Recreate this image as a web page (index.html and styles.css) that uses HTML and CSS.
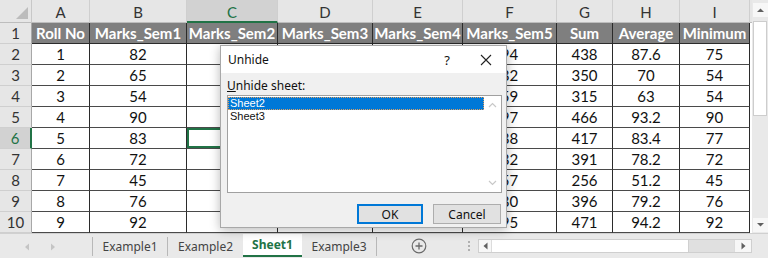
FILE: index.html
```html
<!DOCTYPE html>
<html>
<head>
<meta charset="utf-8">
<link rel="stylesheet" href="styles.css">
</head>
<body>
<div class="top">
  <div class="grid">
    <div class="corner"></div>
    <div class="ch">A</div><div class="ch">B</div><div class="ch sel">C</div><div class="ch">D</div><div class="ch">E</div><div class="ch">F</div><div class="ch">G</div><div class="ch">H</div><div class="ch">I</div><div class="ch jx"></div>

    <div class="rh">1</div>
    <div class="hd">Roll No</div><div class="hd">Marks_Sem1</div><div class="hd">Marks_Sem2</div><div class="hd">Marks_Sem3</div><div class="hd">Marks_Sem4</div><div class="hd">Marks_Sem5</div><div class="hd">Sum</div><div class="hd">Average</div><div class="hd">Minimum</div><div class="jx"></div>

    <div class="rh">2</div>
    <div class="d">1</div><div class="d">82</div><div class="d"></div><div class="d"></div><div class="d"></div><div class="d">94</div><div class="d">438</div><div class="d">87.6</div><div class="d">75</div><div class="jx"></div>

    <div class="rh">3</div>
    <div class="d">2</div><div class="d">65</div><div class="d"></div><div class="d"></div><div class="d"></div><div class="d">82</div><div class="d">350</div><div class="d">70</div><div class="d">54</div><div class="jx"></div>

    <div class="rh">4</div>
    <div class="d">3</div><div class="d">54</div><div class="d"></div><div class="d"></div><div class="d"></div><div class="d">59</div><div class="d">315</div><div class="d">63</div><div class="d">54</div><div class="jx"></div>

    <div class="rh">5</div>
    <div class="d">4</div><div class="d">90</div><div class="d"></div><div class="d"></div><div class="d"></div><div class="d">97</div><div class="d">466</div><div class="d">93.2</div><div class="d">90</div><div class="jx"></div>

    <div class="rh sel">6</div>
    <div class="d">5</div><div class="d">83</div><div class="d act"></div><div class="d"></div><div class="d"></div><div class="d">88</div><div class="d">417</div><div class="d">83.4</div><div class="d">77</div><div class="jx"></div>

    <div class="rh">7</div>
    <div class="d">6</div><div class="d">72</div><div class="d"></div><div class="d"></div><div class="d"></div><div class="d">82</div><div class="d">391</div><div class="d">78.2</div><div class="d">72</div><div class="jx"></div>

    <div class="rh">8</div>
    <div class="d">7</div><div class="d">45</div><div class="d"></div><div class="d"></div><div class="d"></div><div class="d">57</div><div class="d">256</div><div class="d">51.2</div><div class="d">45</div><div class="jx"></div>

    <div class="rh">9</div>
    <div class="d">8</div><div class="d">76</div><div class="d"></div><div class="d"></div><div class="d"></div><div class="d">80</div><div class="d">396</div><div class="d">79.2</div><div class="d">76</div><div class="jx"></div>

    <div class="rh">10</div>
    <div class="d">9</div><div class="d">92</div><div class="d"></div><div class="d"></div><div class="d"></div><div class="d">95</div><div class="d">471</div><div class="d">94.2</div><div class="d">92</div><div class="jx"></div>
  </div>
  <div class="vscroll">
    <div class="sarrow"><svg width="9" height="6" viewBox="0 0 9 6"><path d="M1 5 L4.5 1.5 L8 5 Z" fill="#606060"/></svg></div>
    <div class="vthumb"></div>
    <div class="vtrack"></div>
    <div class="sarrow"><svg width="9" height="6" viewBox="0 0 9 6"><path d="M1 1 L4.5 4.5 L8 1 Z" fill="#606060"/></svg></div>
  </div>
</div>

<div class="tabbar">
  <div class="nav">
    <svg class="navarr" width="6" height="8" viewBox="0 0 6 8"><path d="M5 0.5 L1 4 L5 7.5 Z" fill="#c4c4c4"/></svg>
    <svg class="navarr" width="6" height="8" viewBox="0 0 6 8"><path d="M1 0.5 L5 4 L1 7.5 Z" fill="#c4c4c4"/></svg>
  </div>
  <div class="tab w1">Example1</div>
  <div class="tab w2">Example2</div>
  <div class="tab active">Sheet1</div>
  <div class="tab w1">Example3</div>
  <div class="addsheet">
    <svg width="16" height="16" viewBox="0 0 16 16"><circle cx="8" cy="8" r="6.8" fill="none" stroke="#6a6a6a" stroke-width="1.2"/><path d="M8 4.5 V11.5 M4.5 8 H11.5" stroke="#6a6a6a" stroke-width="1.3"/></svg>
  </div>
  <div class="dots"><span></span><span></span><span></span></div>
  <div class="hscroll">
    <div class="harrow"><svg width="5" height="8" viewBox="0 0 5 8"><path d="M4.5 0.5 L0.5 4 L4.5 7.5 Z" fill="#606060"/></svg></div>
    <div class="hthumb"></div>
    <div class="htrack"></div>
    <div class="harrow r"><svg width="5" height="8" viewBox="0 0 5 8"><path d="M0.5 0.5 L4.5 4 L0.5 7.5 Z" fill="#606060"/></svg></div>
  </div>
</div>

<div class="dialog">
  <div class="dtitle">
    <span class="dname">Unhide</span>
    <span class="dq">?</span>
    <span class="dx"><svg width="12" height="12" viewBox="0 0 12 12"><path d="M1 1 L11 11 M11 1 L1 11" stroke="#222" stroke-width="1.1"/></svg></span>
  </div>
  <div class="dbody">
    <div class="dlabel"><u>U</u>nhide sheet:</div>
    <div class="list">
      <div class="items">
        <div class="item selitem">Sheet2</div>
        <div class="item">Sheet3</div>
      </div>
      <div class="lscroll">
        <svg width="9" height="6" viewBox="0 0 9 6"><path d="M1 5 L4.5 1.5 L8 5" fill="none" stroke="#c8c8c8" stroke-width="1.2"/></svg>
        <svg width="9" height="6" viewBox="0 0 9 6"><path d="M1 1 L4.5 4.5 L8 1" fill="none" stroke="#c8c8c8" stroke-width="1.2"/></svg>
      </div>
    </div>
    <div class="btns">
      <div class="btn ok">OK</div>
      <div class="btn">Cancel</div>
    </div>
  </div>
</div>
</body>
</html>
```

FILE: styles.css
```css
* { box-sizing: border-box; margin: 0; padding: 0; }
html, body { width: 768px; height: 258px; overflow: hidden; }
body {
  font-family: Lato, "Open Sans", sans-serif;
  background: #ffffff;
  position: relative;
}

.top { display: flex; height: 233px; }

.grid {
  display: grid;
  grid-template-columns: 32px 58px 97px 91px 95px 90px 94px 56px 67px 70px 2px;
  grid-template-rows: 23px repeat(10, 21px);
  width: 752px;
}
.grid > div {
  display: flex;
  align-items: center;
  justify-content: center;
  font-size: 15px;
  color: #111;
  white-space: nowrap;
  overflow: hidden;
}

.corner {
  background: #e6e6e6;
  border-right: 1px solid #c8c8c8;
  border-bottom: 1px solid #bdbdbd;
  position: relative;
}
.corner::after {
  content: "";
  position: absolute;
  right: 3px;
  bottom: 3px;
  width: 0;
  height: 0;
  border-left: 12px solid transparent;
  border-bottom: 12px solid #bcbcbc;
}

.grid > .ch {
  background: #e6e6e6;
  border-right: 1px solid #cfcfcf;
  border-bottom: 1px solid #bdbdbd;
  color: #333;
  font-size: 15px;
  padding-top: 2px;
}
.grid > .ch.sel {
  background: #d2d2d2;
  color: #217346;
  border-bottom: 2px solid #217346;
}
.grid > .jx { background: #ffffff; }
.grid > .ch.jx { background: #e6e6e6; border-right: none; }

.grid > .rh {
  background: #e6e6e6;
  border-right: 1px solid #a8a8a8;
  border-bottom: 1px solid #cfcfcf;
  color: #333;
}
.grid > .rh.sel {
  background: #d2d2d2;
  color: #217346;
  border-right: 2px solid #217346;
}

.grid > .hd {
  background: #7f7f7f;
  color: #ffffff;
  font-weight: 700;
  border-right: 1px solid #2b2b2b;
  border-bottom: 1px solid #2b2b2b;
}
.grid > .d {
  border-right: 1px solid #2b2b2b;
  border-bottom: 1px solid #4a4a4a;
}
.grid > .d.act {
  box-shadow: inset 0 0 0 2px #217346;
}

.vscroll {
  width: 16px;
  background: #e9e9e9;
  display: flex;
  flex-direction: column;
  align-items: center;
  padding: 3px 0 1px;
}
.sarrow {
  width: 15px;
  height: 14px;
  display: flex;
  align-items: center;
  justify-content: center;
  background: #f7f7f7;
}
.vthumb {
  width: 14px;
  height: 95px;
  margin-top: 4px;
  background: #ffffff;
  border: 1px solid #cdcdcd;
}
.vtrack { flex: 1; }

.tabbar {
  height: 25px;
  background: #e9e9e9;
  border-top: 1px solid #d0d0d0;
  display: flex;
  align-items: stretch;
  font-family: "Noto Sans", "Open Sans", sans-serif;
  font-size: 12px;
  color: #444;
}
.nav {
  width: 93px;
  display: flex;
  align-items: center;
  padding-left: 24px;
  gap: 20px;
  border-right: 1px solid #b8b8b8;
  margin: 3px 0 2px;
}
.tab {
  display: flex;
  align-items: center;
  justify-content: center;
  border-right: 1px solid #b8b8b8;
  margin: 3px 0 2px;
  padding-bottom: 1px;
}
.tab.w1 { width: 75px; }
.tab.w2 { width: 76px; }
.tab.active {
  width: 59px;
  margin: 0 0 1px -1px;
  background: #ffffff;
  color: #217346;
  font-weight: 700;
  border-right: none;
  border-bottom: 2px solid #217346;
  padding-top: 1px;
}
.addsheet {
  width: 84px;
  display: flex;
  align-items: center;
  justify-content: center;
}
.dots {
  width: 16px;
  display: flex;
  flex-direction: column;
  align-items: center;
  justify-content: center;
  gap: 2px;
}
.dots span { width: 2px; height: 2px; background: #b0b0b0; display: block; }
.hscroll {
  margin: 5px 0 5px 1px;
  width: 274px;
  display: flex;
  border: 1px solid #cfcfcf;
  background: #e0e0e0;
}
.harrow {
  width: 13px;
  display: flex;
  align-items: center;
  justify-content: center;
  background: #f7f7f7;
  border-right: 1px solid #dcdcdc;
}
.harrow.r { width: 17px; border-right: none; border-left: 1px solid #dcdcdc; }
.hthumb { width: 197px; background: #ffffff; border-right: 1px solid #d0d0d0; }
.htrack { flex: 1; background: #e0e0e0; }

.dialog {
  position: absolute;
  left: 220px;
  top: 45px;
  width: 287px;
  height: 183px;
  background: #f0f0f0;
  border: 1px solid #a8a8a8;
  box-shadow: 0 2px 10px rgba(0, 0, 0, 0.28);
  font-family: "Noto Sans", "Liberation Sans", sans-serif;
  font-size: 12px;
  color: #111;
}
.dtitle {
  height: 27px;
  background: #ffffff;
  display: flex;
  align-items: center;
  padding-left: 7px;
}
.dname { flex: 1; }
.dq { width: 20px; text-align: center; margin-right: 23px; font-size: 13px; }
.dx { width: 12px; display: flex; margin-right: 14px; }
.dbody {
  padding: 4px 4px 0 6px;
}
.dlabel { height: 17px; line-height: 17px; }
.list {
  margin-top: 1px;
  height: 98px;
  width: 275px;
  background: #ffffff;
  border: 1px solid #a0a0a0;
  display: flex;
}
.items { flex: 1; padding-top: 1px; }
.item {
  height: 13px;
  line-height: 13px;
  padding-left: 2px;
  font-family: "Liberation Sans", Arial, sans-serif;
  font-size: 11px;
}
.selitem {
  background: #0078d7;
  color: #ffffff;
  outline: 1px dotted #e0a060;
  outline-offset: -1px;
}
.lscroll {
  width: 17px;
  display: flex;
  flex-direction: column;
  align-items: center;
  justify-content: space-between;
  padding: 6px 0 6px;
}
.btns {
  display: flex;
  justify-content: flex-end;
  gap: 10px;
  margin-top: 11px;
  padding-right: 1px;
}
.btn {
  width: 68px;
  height: 20px;
  background: #e1e1e1;
  border: 1px solid #adadad;
  display: flex;
  align-items: center;
  justify-content: center;
}
.btn.ok {
  width: 66px;
  border: 2px solid #0078d7;
}
```
